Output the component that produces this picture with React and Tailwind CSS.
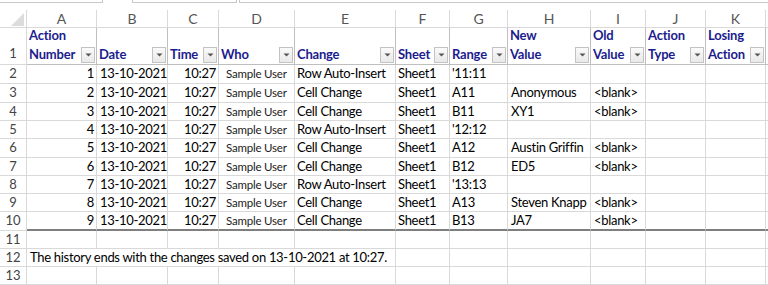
import React from "react";

const cols = ["A", "B", "C", "D", "E", "F", "G", "H", "I", "J", "K"];

const headers = [
  { l1: "Action", l2: "Number" },
  { l1: "", l2: "Date" },
  { l1: "", l2: "Time" },
  { l1: "", l2: "Who" },
  { l1: "", l2: "Change" },
  { l1: "", l2: "Sheet" },
  { l1: "", l2: "Range" },
  { l1: "New", l2: "Value" },
  { l1: "Old", l2: "Value" },
  { l1: "Action", l2: "Type" },
  { l1: "Losing", l2: "Action" },
];

const data = [
  ["1", "Row Auto-Insert", "'11:11", "", ""],
  ["2", "Cell Change", "A11", "Anonymous", "<blank>"],
  ["3", "Cell Change", "B11", "XY1", "<blank>"],
  ["4", "Row Auto-Insert", "'12:12", "", ""],
  ["5", "Cell Change", "A12", "Austin Griffin", "<blank>"],
  ["6", "Cell Change", "B12", "ED5", "<blank>"],
  ["7", "Row Auto-Insert", "'13:13", "", ""],
  ["8", "Cell Change", "A13", "Steven Knapp", "<blank>"],
  ["9", "Cell Change", "B13", "JA7", "<blank>"],
];

const FONT = { fontFamily: "Lato, 'Open Sans', sans-serif" };

function Filter() {
  return (
    <div className="absolute right-[1px] bottom-[1px] w-[14px] h-[16px] border border-[#c3c3c3] bg-gradient-to-b from-[#fafafa] to-[#e9e9e9] flex items-center justify-center">
      <svg width="7" height="4" viewBox="0 0 7 4">
        <polygon points="0.5,0.5 6.5,0.5 3.5,3.5" fill="#555" />
      </svg>
    </div>
  );
}

const base = "border-r border-b border-[#d9d9d9] overflow-hidden whitespace-nowrap flex items-center";
const cell = `${base} text-[13px] tracking-[-0.3px] text-black`;
const small = `${base} text-[11.5px] tracking-[-0.2px] text-[#222]`;
const rowHead = "border-r border-b border-[#d9d9d9] flex items-center justify-center text-[13px] text-[#444]";
const thick = "border-b-2 border-b-[#7f7f7f]";

export default function App() {
  const rowHeights = ["h-[19px]", "h-[19px]", "h-[18px]", "h-[18px]", "h-[19px]", "h-[18px]", "h-[18px]", "h-[18px]", "h-[19px]"];
  return (
    <div className="w-[768px] h-[285px] bg-white overflow-hidden" style={FONT}>
      {/* formula bar remnant */}
      <div className="h-[10px] flex items-start">
        <div className="w-[103px] h-[3px] border-b border-r border-[#c8c8c8] bg-white" />
        <div className="w-[29px]" />
        <div className="w-[105px] h-[3px] border-b border-r border-l border-[#c8c8c8] bg-white" />
        <div className="flex-1 h-[3px] border-b border-l border-[#c8c8c8] bg-white ml-[2px]" />
      </div>
      <div className="grid grid-cols-[27px_70px_71px_51px_76px_101px_54px_58px_83px_55px_60px_60px_2px]">
        {/* column header row */}
        <div className="h-[18px] border-r border-b border-[#d9d9d9] relative">
          <svg className="absolute right-[2px] bottom-[1px]" width="13" height="13" viewBox="0 0 13 13">
            <polygon points="13,0 13,13 0,13" fill="#dcdcdc" />
          </svg>
        </div>
        {cols.map((c) => (
          <div key={c} className="h-[18px] border-r border-b border-[#d9d9d9] flex items-center justify-center text-[14px] text-[#555]">
            {c}
          </div>
        ))}
        <div className="h-[18px] border-b border-[#d9d9d9]" />

        {/* header row 1 */}
        <div className="h-[37px] border-r border-b border-[#d9d9d9] flex items-end justify-center pb-[1px] text-[13px] text-[#444]">1</div>
        {headers.map((h, i) => (
          <div key={i} className="h-[37px] border-r border-b border-[#bfbfbf] relative px-[2px] flex flex-col justify-end text-[13px] tracking-[-0.2px] font-bold text-[#1c1c8e] leading-[19px] whitespace-nowrap">
            <div>{h.l1}</div>
            <div>{h.l2}</div>
            <Filter />
          </div>
        ))}
        <div className="h-[37px] border-b border-[#bfbfbf]" />

        {/* data rows */}
        {data.map((r, i) => {
          const h = rowHeights[i];
          const last = i === data.length - 1;
          const b = last ? thick : "";
          return (
            <React.Fragment key={i}>
              <div className={`${rowHead} ${h}`}>{i + 2}</div>
              <div className={`${cell} ${h} justify-end pr-[2px] ${b}`}>{r[0]}</div>
              <div className={`${cell} ${h} pl-[3px] ${b}`}>13-10-2021</div>
              <div className={`${cell} ${h} justify-end pr-[2px] ${b}`}>10:27</div>
              <div className={`${small} ${h} pl-[7px] ${b}`}>Sample User</div>
              <div className={`${cell} ${h} pl-[2px] ${b}`}>{r[1]}</div>
              <div className={`${cell} ${h} pl-[2px] ${b}`}>Sheet1</div>
              <div className={`${cell} ${h} pl-[2px] ${b}`}>{r[2]}</div>
              <div className={`${cell} ${h} pl-[3px] ${b}`}>{r[3]}</div>
              <div className={`${cell} ${h} pl-[3px] ${b}`}>{r[4]}</div>
              <div className={`${cell} ${h} ${b}`}></div>
              <div className={`${cell} ${h} ${b}`}></div>
              <div className={`border-b border-[#d9d9d9] ${h} ${b}`}></div>
            </React.Fragment>
          );
        })}

        {/* row 11 */}
        <div className={`${rowHead} h-[18px]`}>11</div>
        {cols.map((c) => (
          <div key={c} className={`${cell} h-[18px]`} />
        ))}
        <div className="border-b border-[#d9d9d9] h-[18px]" />

        {/* row 12 */}
        <div className={`${rowHead} h-[18px]`}>12</div>
        <div className={`${cell} h-[18px] col-span-5 pl-[3px]`}>The history ends with the changes saved on 13-10-2021 at 10:27.</div>
        {cols.slice(5).map((c) => (
          <div key={c} className={`${cell} h-[18px]`} />
        ))}
        <div className="border-b border-[#d9d9d9] h-[18px]" />

        {/* row 13 */}
        <div className={`${rowHead} h-[18px]`}>13</div>
        {cols.map((c) => (
          <div key={c} className={`${cell} h-[18px]`} />
        ))}
        <div className="border-b border-[#d9d9d9] h-[18px]" />
      </div>
    </div>
  );
}
